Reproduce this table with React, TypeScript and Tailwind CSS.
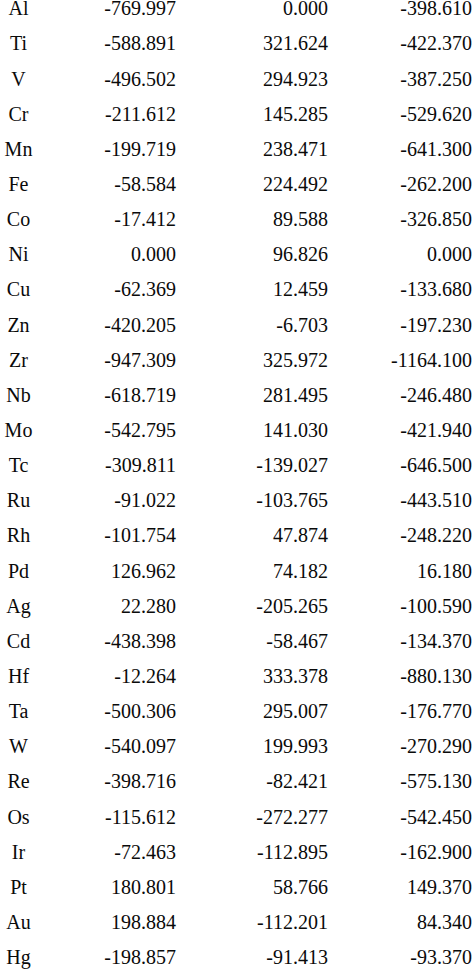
import React from "react";

const rows: [string, string, string, string][] = [
  ["Al", "-769.997", "0.000", "-398.610"],
  ["Ti", "-588.891", "321.624", "-422.370"],
  ["V", "-496.502", "294.923", "-387.250"],
  ["Cr", "-211.612", "145.285", "-529.620"],
  ["Mn", "-199.719", "238.471", "-641.300"],
  ["Fe", "-58.584", "224.492", "-262.200"],
  ["Co", "-17.412", "89.588", "-326.850"],
  ["Ni", "0.000", "96.826", "0.000"],
  ["Cu", "-62.369", "12.459", "-133.680"],
  ["Zn", "-420.205", "-6.703", "-197.230"],
  ["Zr", "-947.309", "325.972", "-1164.100"],
  ["Nb", "-618.719", "281.495", "-246.480"],
  ["Mo", "-542.795", "141.030", "-421.940"],
  ["Tc", "-309.811", "-139.027", "-646.500"],
  ["Ru", "-91.022", "-103.765", "-443.510"],
  ["Rh", "-101.754", "47.874", "-248.220"],
  ["Pd", "126.962", "74.182", "16.180"],
  ["Ag", "22.280", "-205.265", "-100.590"],
  ["Cd", "-438.398", "-58.467", "-134.370"],
  ["Hf", "-12.264", "333.378", "-880.130"],
  ["Ta", "-500.306", "295.007", "-176.770"],
  ["W", "-540.097", "199.993", "-270.290"],
  ["Re", "-398.716", "-82.421", "-575.130"],
  ["Os", "-115.612", "-272.277", "-542.450"],
  ["Ir", "-72.463", "-112.895", "-162.900"],
  ["Pt", "180.801", "58.766", "149.370"],
  ["Au", "198.884", "-112.201", "84.340"],
  ["Hg", "-198.857", "-91.413", "-93.370"],
];

export default function App() {
  return (
    <div className="w-[474px] h-[970px] overflow-hidden bg-white text-[#0a0a0a]">
      <div
        className="grid grid-cols-[37px_139px_152px_144px] gap-y-[19.15px] pt-[0.3px] text-[20px] leading-[16px]"
        style={{ fontFamily: '"Liberation Serif", "Times New Roman", serif' }}
      >
        {rows.map((r) => (
          <React.Fragment key={r[0]}>
            <div className="text-center">{r[0]}</div>
            <div className="text-right">{r[1]}</div>
            <div className="text-right">{r[2]}</div>
            <div className="text-right">{r[3]}</div>
          </React.Fragment>
        ))}
      </div>
    </div>
  );
}
